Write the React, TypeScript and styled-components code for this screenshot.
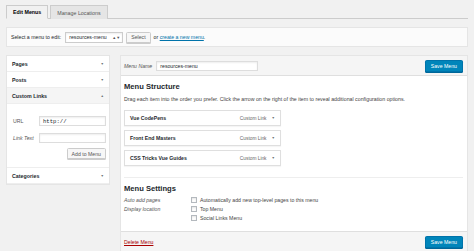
import styled, { createGlobalStyle } from 'styled-components'

const GlobalStyle = createGlobalStyle`
  html, body {
    margin: 0;
    padding: 0;
    background: #f1f1f1;
  }
  body {
    font-family: "Liberation Sans", Arial, sans-serif;
    font-size: 5.2px;
    color: #23282d;
  }
  * {
    box-sizing: border-box;
  }
`

const Page = styled.div`
  width: 474px;
  height: 251px;
  padding: 5px 6px 0 6px;
  overflow: hidden;
`

const TabBar = styled.div`
  display: flex;
  gap: 2px;
  height: 14px;
  border-bottom: 1px solid #ccc;
`

const Tab = styled.div<{ $active?: boolean }>`
  display: flex;
  align-items: center;
  padding: 0 6px;
  height: 14px;
  font-size: 5.3px;
  font-weight: ${(p) => (p.$active ? 600 : 400)};
  color: ${(p) => (p.$active ? '#000' : '#555')};
  background: ${(p) => (p.$active ? '#f1f1f1' : '#e5e5e5')};
  border: 1px solid #ccc;
  border-bottom: ${(p) => (p.$active ? '1px solid #f1f1f1' : 'none')};
  margin-bottom: -1px;
`

const SelectBar = styled.div`
  display: flex;
  align-items: center;
  gap: 3px;
  margin-top: 8px;
  height: 20px;
  padding: 0 4px;
  background: #fbfbfb;
  border: 1px solid #e5e5e5;
`

const FakeSelect = styled.div`
  display: flex;
  align-items: center;
  justify-content: space-between;
  width: 58px;
  height: 11px;
  padding: 0 2px 0 3px;
  margin-left: 1px;
  background: #fff;
  border: 1px solid #ccc;
  box-shadow: inset 0 1px 2px rgba(0, 0, 0, 0.07);
`

const SelectArrow = styled.span`
  font-size: 4px;
  color: #555;
`

const GreyButton = styled.div`
  display: inline-flex;
  align-items: center;
  justify-content: center;
  height: 11px;
  padding: 0 4px;
  background: #f7f7f7;
  border: 1px solid #ccc;
  border-radius: 1.5px;
  color: #555;
  box-shadow: 0 1px 0 #ccc;
`

const Link = styled.a<{ $danger?: boolean }>`
  color: ${(p) => (p.$danger ? '#a00' : '#0073aa')};
  text-decoration: underline;
`

const Columns = styled.div`
  display: flex;
  align-items: flex-start;
  gap: 10px;
  margin-top: 8px;
`

const Sidebar = styled.div`
  width: 104px;
  background: #fff;
  border: 1px solid #e5e5e5;
`

const SideHeader = styled.div<{ $open?: boolean }>`
  display: flex;
  align-items: center;
  justify-content: space-between;
  height: 16px;
  padding: 0 5px;
  font-weight: 700;
  font-size: 5.3px;
  background: ${(p) => (p.$open ? '#f5f5f5' : '#fff')};
  border-bottom: 1px solid #eee;
`

const Caret = styled.span`
  font-size: 3.5px;
  color: #72777c;
`

const LinkForm = styled.div`
  display: grid;
  grid-template-columns: 26px 1fr;
  align-items: center;
  row-gap: 7px;
  padding: 12px 3px 8px 6px;
  border-bottom: 1px solid #eee;
`

const Label = styled.span`
  font-style: italic;
  color: #555;
`

const PlainLabel = styled.span`
  color: #555;
`

const Input = styled.div<{ $w?: number; $mono?: boolean }>`
  display: flex;
  align-items: center;
  width: ${(p) => (p.$w ? `${p.$w}px` : '100%')};
  height: 10px;
  padding: 0 3px;
  background: #fff;
  border: 1px solid #ddd;
  box-shadow: inset 0 1px 2px rgba(0, 0, 0, 0.07);
  font-family: ${(p) =>
    p.$mono ? '"Liberation Mono", "DejaVu Sans Mono", monospace' : 'inherit'};
  font-size: ${(p) => (p.$mono ? '5.6px' : '5.2px')};
`

const FormActions = styled.div`
  grid-column: 1 / span 2;
  display: flex;
  justify-content: flex-end;
  margin-top: -2px;
`

const Main = styled.div`
  flex: 1;
  background: #fff;
  border: 1px solid #e5e5e5;
`

const MainHeader = styled.div`
  display: flex;
  align-items: center;
  justify-content: space-between;
  height: 20px;
  padding: 0 4px 0 3px;
  background: #f5f5f5;
  border-bottom: 1px solid #dfdfdf;
`

const NameField = styled.div`
  display: flex;
  align-items: center;
  gap: 4px;
`

const PrimaryButton = styled.div`
  display: inline-flex;
  align-items: center;
  justify-content: center;
  height: 12px;
  padding: 0 5px;
  background: #0085ba;
  border: 1px solid #0073aa;
  border-radius: 1.5px;
  color: #fff;
  font-size: 5.2px;
  box-shadow: 0 1px 0 #006799;
`

const MainBody = styled.div`
  padding: 6px 4px 0 3px;
`

const Heading = styled.div`
  font-size: 7.6px;
  font-weight: 600;
  color: #23282d;
`

const Description = styled.div`
  margin-top: 5px;
  font-size: 5.25px;
  color: #444;
`

const ItemList = styled.div`
  display: flex;
  flex-direction: column;
  gap: 4px;
  width: 157px;
  margin-top: 8px;
`

const Item = styled.div`
  display: flex;
  align-items: center;
  justify-content: space-between;
  height: 16px;
  padding: 0 5px;
  background: #fff;
  border: 1px solid #dfdfdf;
  box-shadow: 0 1px 1px rgba(0, 0, 0, 0.04);
  font-weight: 700;
`

const ItemMeta = styled.span`
  display: flex;
  gap: 5px;
  font-weight: 400;
  color: #666;
  font-size: 4.8px;
`

const Divider = styled.div`
  margin-top: 11px;
  border-top: 1px solid #eee;
`

const Settings = styled.div`
  padding-top: 6px;
  padding-bottom: 10px;
`

const SettingsGrid = styled.div`
  display: grid;
  grid-template-columns: 67px 1fr;
  row-gap: 3px;
  margin-top: 4px;
`

const OptionList = styled.div`
  display: flex;
  flex-direction: column;
  gap: 3px;
`

const Option = styled.label`
  display: flex;
  align-items: center;
  gap: 3px;
  color: #444;
`

const Checkbox = styled.span`
  width: 6px;
  height: 6px;
  background: #fff;
  border: 1px solid #b4b9be;
  box-shadow: inset 0 1px 2px rgba(0, 0, 0, 0.1);
`

const MainFooter = styled.div`
  display: flex;
  align-items: center;
  justify-content: space-between;
  height: 20px;
  padding: 0 4px 0 3px;
  background: #f5f5f5;
  border-top: 1px solid #dfdfdf;
`

const menuItems = ['Vue CodePens', 'Front End Masters', 'CSS Tricks Vue Guides']

export default function App() {
  return (
    <Page>
      <GlobalStyle />
      <TabBar>
        <Tab $active>Edit Menus</Tab>
        <Tab>Manage Locations</Tab>
      </TabBar>

      <SelectBar>
        <span>Select a menu to edit:</span>
        <FakeSelect>
          <span>resources-menu</span>
          <SelectArrow>▲▼</SelectArrow>
        </FakeSelect>
        <GreyButton>Select</GreyButton>
        <span>
          or <Link>create a new menu</Link>.
        </span>
      </SelectBar>

      <Columns>
        <Sidebar>
          <SideHeader>
            Pages <Caret>▼</Caret>
          </SideHeader>
          <SideHeader>
            Posts <Caret>▼</Caret>
          </SideHeader>
          <SideHeader $open>
            Custom Links <Caret>▲</Caret>
          </SideHeader>
          <LinkForm>
            <PlainLabel>URL</PlainLabel>
            <Input $mono>http://</Input>
            <Label>Link Text</Label>
            <Input />
            <FormActions>
              <GreyButton>Add to Menu</GreyButton>
            </FormActions>
          </LinkForm>
          <SideHeader>
            Categories <Caret>▼</Caret>
          </SideHeader>
        </Sidebar>

        <Main>
          <MainHeader>
            <NameField>
              <Label>Menu Name</Label>
              <Input $w={102}>resources-menu</Input>
            </NameField>
            <PrimaryButton>Save Menu</PrimaryButton>
          </MainHeader>

          <MainBody>
            <Heading>Menu Structure</Heading>
            <Description>
              Drag each item into the order you prefer. Click the arrow on the
              right of the item to reveal additional configuration options.
            </Description>
            <ItemList>
              {menuItems.map((name) => (
                <Item key={name}>
                  {name}
                  <ItemMeta>
                    Custom Link <Caret>▼</Caret>
                  </ItemMeta>
                </Item>
              ))}
            </ItemList>

            <Divider />
            <Settings>
              <Heading>Menu Settings</Heading>
              <SettingsGrid>
                <Label>Auto add pages</Label>
                <Option>
                  <Checkbox />
                  Automatically add new top-level pages to this menu
                </Option>
                <Label>Display location</Label>
                <OptionList>
                  <Option>
                    <Checkbox />
                    Top Menu
                  </Option>
                  <Option>
                    <Checkbox />
                    Social Links Menu
                  </Option>
                </OptionList>
              </SettingsGrid>
            </Settings>
          </MainBody>

          <MainFooter>
            <Link $danger>Delete Menu</Link>
            <PrimaryButton>Save Menu</PrimaryButton>
          </MainFooter>
        </Main>
      </Columns>
    </Page>
  )
}
